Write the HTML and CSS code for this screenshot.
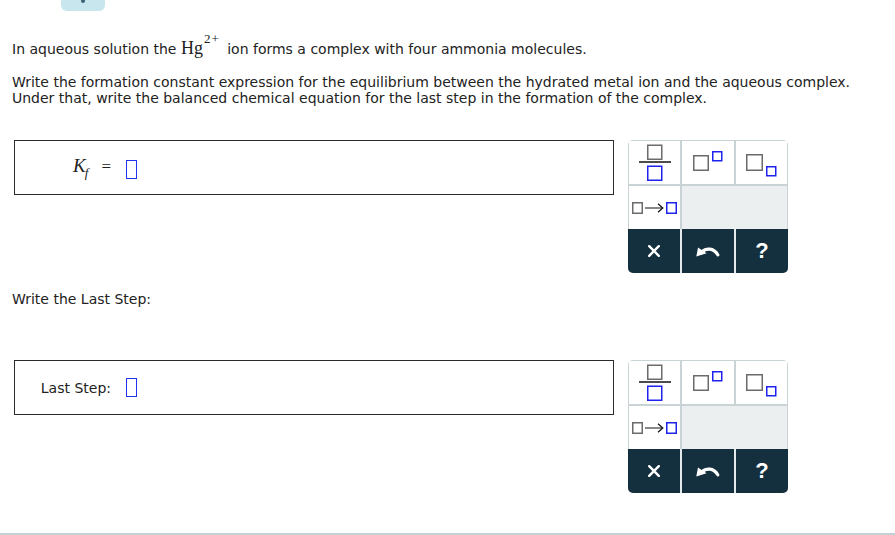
FILE: index.html
```html
<!DOCTYPE html>
<html lang="en">
<head>
<meta charset="utf-8">
<title>Formation constant</title>
<link rel="stylesheet" href="styles.css">
</head>
<body>
<div class="tab"><span class="tab-mark"></span></div>
<main class="content">
  <p class="q1">In aqueous solution the <span class="chem">Hg<sup class="charge">2+</sup></span> ion forms a complex with four ammonia molecules.</p>
  <p class="q2">Write the formation constant expression for the equilibrium between the hydrated metal ion and the aqueous complex.<br>Under that, write the balanced chemical equation for the last step in the formation of the complex.</p>

  <section class="answer-row">
    <div class="answer-box first">
      <span class="ans-label"><span class="kf"><i>K</i><sub>f</sub></span><span class="eq">=</span></span>
      <span class="cursor"></span>
    </div>
    <div class="palette">
      <div class="tools">
        <div class="tool">
          <svg width="32" height="37" viewBox="0 0 32 37"><rect x="8.75" y="1.25" width="14" height="14" fill="none" stroke="#6b6b6b" stroke-width="1.5"/><line x1="0" y1="18" x2="32" y2="18" stroke="#111" stroke-width="1.4"/><rect x="8.75" y="22.25" width="14" height="14" fill="none" stroke="#1d22ee" stroke-width="1.5"/></svg>
        </div>
        <div class="tool">
          <svg width="30" height="23" viewBox="0 0 30 23"><rect x="0.75" y="4.75" width="14.5" height="14.5" fill="none" stroke="#6b6b6b" stroke-width="1.5"/><rect x="19.75" y="0.75" width="9" height="9" fill="none" stroke="#1d22ee" stroke-width="1.5"/></svg>
        </div>
        <div class="tool">
          <svg width="31" height="28" viewBox="0 0 31 28"><rect x="0.75" y="5.75" width="15.5" height="15.5" fill="none" stroke="#6b6b6b" stroke-width="1.5"/><rect x="20.75" y="17.75" width="9" height="9" fill="none" stroke="#1d22ee" stroke-width="1.5"/></svg>
        </div>
        <div class="tool">
          <svg width="45" height="12" viewBox="0 0 45 12"><rect x="0.75" y="0.75" width="9.5" height="10.5" fill="none" stroke="#6b6b6b" stroke-width="1.5"/><line x1="13" y1="6" x2="30.5" y2="6" stroke="#111" stroke-width="1.2"/><polyline points="26,1.8 30.8,6 26,10.2" fill="none" stroke="#111" stroke-width="1.2"/><rect x="34.75" y="0.75" width="9.5" height="10.5" fill="none" stroke="#1d22ee" stroke-width="1.5"/></svg>
        </div>
        <div class="tool-empty"></div>
      </div>
      <div class="actions">
        <div class="act">
          <svg width="12" height="12" viewBox="0 0 12 12"><path d="M1.2 1.2 L10.8 10.8 M10.8 1.2 L1.2 10.8" stroke="#fff" stroke-width="2.4" stroke-linecap="round"/></svg>
        </div>
        <div class="act">
          <svg width="24" height="11" viewBox="0 0 24 11"><path d="M6 6 C10 2 17.5 1.6 21.8 8.8" stroke="#fff" stroke-width="3.2" fill="none" stroke-linecap="round"/><path d="M0.3 10.6 L2 1.6 L10.6 7.2 Z" fill="#fff"/></svg>
        </div>
        <div class="act help">?</div>
      </div>
    </div>
  </section>

  <p class="label">Write the Last Step:</p>

  <section class="answer-row second">
    <div class="answer-box">
      <span class="ans-label">Last Step:</span>
      <span class="cursor"></span>
    </div>
    <div class="palette">
      <div class="tools">
        <div class="tool">
          <svg width="32" height="37" viewBox="0 0 32 37"><rect x="8.75" y="1.25" width="14" height="14" fill="none" stroke="#6b6b6b" stroke-width="1.5"/><line x1="0" y1="18" x2="32" y2="18" stroke="#111" stroke-width="1.4"/><rect x="8.75" y="22.25" width="14" height="14" fill="none" stroke="#1d22ee" stroke-width="1.5"/></svg>
        </div>
        <div class="tool">
          <svg width="30" height="23" viewBox="0 0 30 23"><rect x="0.75" y="4.75" width="14.5" height="14.5" fill="none" stroke="#6b6b6b" stroke-width="1.5"/><rect x="19.75" y="0.75" width="9" height="9" fill="none" stroke="#1d22ee" stroke-width="1.5"/></svg>
        </div>
        <div class="tool">
          <svg width="31" height="28" viewBox="0 0 31 28"><rect x="0.75" y="5.75" width="15.5" height="15.5" fill="none" stroke="#6b6b6b" stroke-width="1.5"/><rect x="20.75" y="17.75" width="9" height="9" fill="none" stroke="#1d22ee" stroke-width="1.5"/></svg>
        </div>
        <div class="tool">
          <svg width="45" height="12" viewBox="0 0 45 12"><rect x="0.75" y="0.75" width="9.5" height="10.5" fill="none" stroke="#6b6b6b" stroke-width="1.5"/><line x1="13" y1="6" x2="30.5" y2="6" stroke="#111" stroke-width="1.2"/><polyline points="26,1.8 30.8,6 26,10.2" fill="none" stroke="#111" stroke-width="1.2"/><rect x="34.75" y="0.75" width="9.5" height="10.5" fill="none" stroke="#1d22ee" stroke-width="1.5"/></svg>
        </div>
        <div class="tool-empty"></div>
      </div>
      <div class="actions">
        <div class="act">
          <svg width="12" height="12" viewBox="0 0 12 12"><path d="M1.2 1.2 L10.8 10.8 M10.8 1.2 L1.2 10.8" stroke="#fff" stroke-width="2.4" stroke-linecap="round"/></svg>
        </div>
        <div class="act">
          <svg width="24" height="11" viewBox="0 0 24 11"><path d="M6 6 C10 2 17.5 1.6 21.8 8.8" stroke="#fff" stroke-width="3.2" fill="none" stroke-linecap="round"/><path d="M0.3 10.6 L2 1.6 L10.6 7.2 Z" fill="#fff"/></svg>
        </div>
        <div class="act help">?</div>
      </div>
    </div>
  </section>
</main>
<div class="footer-line"></div>
</body>
</html>
```

FILE: styles.css
```css
html, body {
  margin: 0;
  padding: 0;
  background: #fff;
}

body {
  font-family: "DejaVu Sans", Verdana, sans-serif;
  font-size: 14px;
  line-height: 16px;
  color: #222;
  width: 895px;
  height: 535px;
  overflow: hidden;
}

.tab {
  width: 44px;
  height: 11px;
  margin-left: 61px;
  background: #c8e6ee;
  border-radius: 0 0 6px 6px;
  display: flex;
  justify-content: center;
}

.tab-mark {
  width: 4px;
  height: 3px;
  background: #3d6676;
  border-radius: 0 0 2px 2px;
}

.content {
  padding-left: 12px;
}

.q1 {
  margin: 28px 0 0;
  height: 16px;
}

.chem {
  font-family: "Liberation Serif", "Times New Roman", serif;
  font-size: 18px;
  line-height: 0;
}

.charge {
  font-size: 13px;
  line-height: 0;
  vertical-align: 11px;
  letter-spacing: 1px;
  margin-left: 1px;
  margin-right: 3px;
}

.q2 {
  margin: 19px 0 0;
}

.answer-row {
  display: flex;
  align-items: flex-start;
  gap: 14px;
  margin: 34px 0 0 2px;
}

.answer-row.second {
  margin-top: 53px;
}

.answer-box {
  width: 600px;
  height: 55px;
  box-sizing: border-box;
  border: 1px solid #2a2a2a;
  display: flex;
  align-items: center;
  flex: none;
}

.answer-box.first {
  padding-top: 3px;
}

.ans-label {
  width: 96px;
  display: flex;
  justify-content: flex-end;
  align-items: baseline;
}

.first .ans-label {
  margin-bottom: 6px;
}

.kf {
  font-family: "Liberation Serif", "Times New Roman", serif;
  font-size: 19px;
  line-height: 18px;
}

.kf i {
  font-style: italic;
}

.kf sub {
  font-size: 13px;
  font-style: italic;
  line-height: 0;
  vertical-align: -5px;
  margin-left: -1px;
}

.eq {
  font-family: "Liberation Serif", "Times New Roman", serif;
  font-size: 17px;
  margin-left: 13px;
}

.cursor {
  width: 11px;
  height: 19px;
  box-sizing: border-box;
  border: 1px solid #2233ee;
  margin-left: 15px;
}

.label {
  margin: 18px 0 0;
}

.palette {
  width: 160px;
  flex: none;
  border-radius: 5px;
  overflow: hidden;
  background: #c9d3d6;
}

.tools {
  display: grid;
  grid-template-columns: repeat(3, 1fr);
  grid-template-rows: 43px 43px;
  gap: 2px;
  padding: 1px 1px 0;
}

.tool {
  background: #fff;
  display: flex;
  align-items: center;
  justify-content: center;
}

.tool svg {
  display: block;
}

.tool-empty {
  grid-column: 2 / 4;
  background: #ebeff0;
}

.actions {
  display: grid;
  grid-template-columns: repeat(3, 1fr);
  gap: 2px;
  height: 44px;
  background: #e4eaec;
}

.act {
  background: #142f3d;
  display: flex;
  align-items: center;
  justify-content: center;
  color: #fff;
}

.act svg {
  display: block;
}

.help {
  font-family: "Liberation Sans", Arial, sans-serif;
  font-weight: bold;
  font-size: 22px;
  line-height: 22px;
}

.footer-line {
  height: 2px;
  background: #c5d1d4;
  margin-top: 40px;
}
```
